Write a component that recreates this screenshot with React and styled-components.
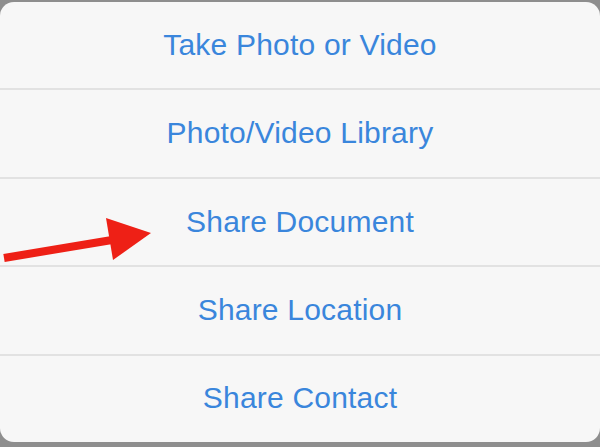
import React from "react";
import styled, { createGlobalStyle } from "styled-components";

const Global = createGlobalStyle`
  html, body {
    margin: 0;
    padding: 0;
    background: #8e8e8e;
  }
  body {
    width: 600px;
    height: 447px;
    overflow: hidden;
    font-family: "Liberation Sans", Arial, sans-serif;
  }
`;

const Screen = styled.div`
  position: relative;
  width: 600px;
  height: 447px;
  padding-top: 2px;
  box-sizing: border-box;
`;

const Sheet = styled.div`
  display: flex;
  flex-direction: column;
  width: 600px;
  height: 440px;
  background: #f7f7f7;
  border-radius: 14px;
  overflow: hidden;
`;

const Option = styled.div`
  flex: 1;
  display: flex;
  align-items: center;
  justify-content: center;
  color: #3a86dc;
  font-size: 30px;
  letter-spacing: 0.2px;
  border-top: ${({ first }) => (first ? "none" : "2px solid #e2e2e2")};
  padding-bottom: 1px;
`;

const Arrow = styled.svg`
  position: absolute;
  left: 0;
  top: 0;
  pointer-events: none;
`;

const options = [
  "Take Photo or Video",
  "Photo/Video Library",
  "Share Document",
  "Share Location",
  "Share Contact",
];

export default function App() {
  return (
    <>
      <Global />
      <Screen>
        <Sheet>
          {options.map((label, i) => (
            <Option key={label} first={i === 0}>
              {label}
            </Option>
          ))}
        </Sheet>
        <Arrow width="600" height="447" viewBox="0 0 600 447">
          <line x1="4" y1="258" x2="112" y2="240" stroke="#ee2016" strokeWidth="8" strokeLinecap="butt" />
          <polygon points="106,218 151,233 113,260" fill="#ee2016" />
        </Arrow>
      </Screen>
    </>
  );
}
